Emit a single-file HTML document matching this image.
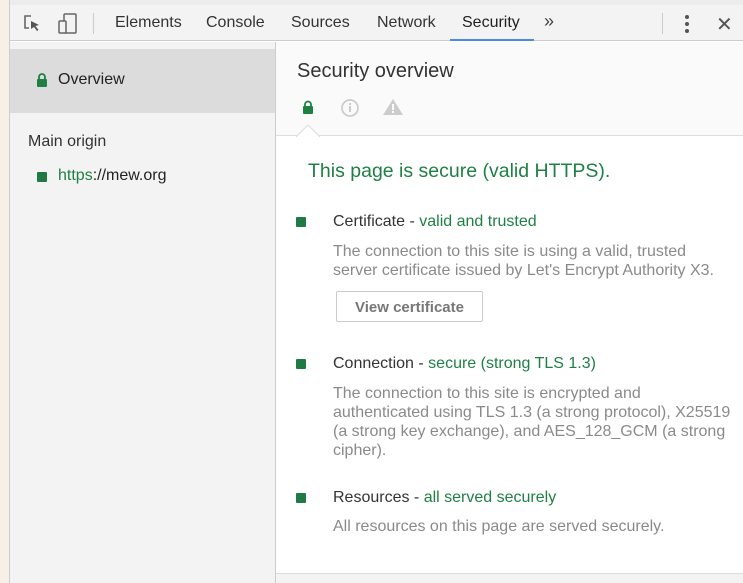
<!DOCTYPE html>
<html><head><meta charset="utf-8"><style>
*{margin:0;padding:0;box-sizing:border-box}
body{width:743px;height:583px;overflow:hidden;background:#fff;font-family:"Liberation Sans",sans-serif;position:relative;color:#333}
.a{position:absolute;white-space:nowrap}
.g{color:#1f8044}
.d{color:#8a8a8a}
.sq{position:absolute;width:10px;height:10px;background:#1f7a43;border-radius:1px}
</style></head><body>
<div class="a" style="left:0;top:0;width:10px;height:583px;background:#f8efe6"></div>
<div class="a" style="left:9px;top:0;width:1px;height:583px;background:#ccc"></div>
<div class="a" style="left:10px;top:0;width:733px;height:5px;background:#ececec"></div>
<div class="a" style="left:10px;top:5px;width:733px;height:36px;background:#f3f3f3;border-bottom:1px solid #ccc"></div>
<svg class="a" style="left:22px;top:13px" width="22" height="22" viewBox="0 0 22 22"><path d="M9 3H3v12h4" fill="none" stroke="#666" stroke-width="1.6"/><path d="M9 8l8 4-3.5 1 3 4-1.5 1-3-4-3 2z" fill="#555"/></svg>
<svg class="a" style="left:57px;top:12px" width="22" height="24" viewBox="0 0 22 24"><rect x="7" y="2" width="12" height="19" rx="1" fill="none" stroke="#666" stroke-width="1.5"/><rect x="2" y="9" width="7" height="12" rx="1" fill="#f3f3f3" stroke="#666" stroke-width="1.5"/></svg>
<div class="a" style="left:93px;top:13px;width:1px;height:21px;background:#ccc"></div>
<div class="a" style="left:115px;top:14px;font-size:16px;color:#333">Elements</div>
<div class="a" style="left:206px;top:14px;font-size:16px;color:#333">Console</div>
<div class="a" style="left:291px;top:14px;font-size:16px;color:#333">Sources</div>
<div class="a" style="left:377px;top:14px;font-size:16px;color:#333">Network</div>
<div class="a" style="left:462px;top:14px;font-size:16px;color:#222">Security</div>
<div class="a" style="left:450px;top:39px;width:84px;height:2px;background:#4a8ae8"></div>
<div class="a" style="left:544px;top:11px;font-size:18px;color:#444">»</div>
<div class="a" style="left:662px;top:13px;width:1px;height:21px;background:#ccc"></div>
<div class="a" style="left:685px;top:15px;width:4px;height:4px;border-radius:2px;background:#555;box-shadow:0 7px 0 #555,0 14px 0 #555"></div>
<div class="a" style="left:716px;top:12px;font-size:20px;color:#555">✕</div>
<!-- sidebar -->
<div class="a" style="left:10px;top:42px;width:265px;height:541px;background:#f3f3f3"></div>
<div class="a" style="left:10px;top:49px;width:265px;height:64px;background:#dcdcdc"></div>
<div class="a" style="left:275px;top:42px;width:1px;height:541px;background:#ccc"></div>
<svg class="a" style="left:36px;top:73px" width="12" height="14" viewBox="0 0 12 14"><path d="M3 6V4a3 3 0 0 1 6 0v2" fill="none" stroke="#1f8044" stroke-width="1.8"/><rect x="1" y="6" width="10" height="8" rx="1" fill="#1f8044"/></svg>
<div class="a" style="left:58px;top:71px;font-size:16px;color:#222">Overview</div>
<div class="a" style="left:28px;top:133px;font-size:16px;color:#333">Main origin</div>
<div class="sq" style="left:37px;top:172px"></div>
<div class="a" style="left:58px;top:167px;font-size:16px;color:#222"><span class="g">https</span>://mew.org</div>
<!-- main -->
<div class="a" style="left:276px;top:42px;width:467px;height:94px;background:#fafafa;border-bottom:1px solid #ddd"></div>
<div class="a" style="left:297px;top:60px;font-size:20px;color:#333">Security overview</div>
<svg class="a" style="left:301px;top:99px" width="14" height="16" viewBox="0 0 14 16"><path d="M4 8V5.5a3 3 0 0 1 6 0V8" fill="none" stroke="#1f8044" stroke-width="1.8"/><rect x="2" y="7" width="10" height="8" rx="1" fill="#1f8044"/></svg>
<svg class="a" style="left:340px;top:98px" width="20" height="20" viewBox="0 0 20 20"><circle cx="10" cy="10" r="8" fill="none" stroke="#ccc" stroke-width="1.7"/><rect x="9" y="8" width="2" height="6" fill="#ccc"/><rect x="9" y="5" width="2" height="2" fill="#ccc"/></svg>
<svg class="a" style="left:382px;top:98px" width="22" height="18" viewBox="0 0 22 18"><path d="M11 1L21 17H1z" fill="#ccc"/><rect x="10" y="6" width="2" height="6" fill="#fff"/><rect x="10" y="13" width="2" height="2" fill="#fff"/></svg>
<svg class="a" style="left:296px;top:125px" width="24" height="13" viewBox="0 0 24 13"><path d="M0 12L12 0 24 12" fill="#fff" stroke="#ddd" stroke-width="1"/></svg>
<div class="a" style="left:276px;top:137px;width:467px;height:436px;background:#fff"></div>
<div class="a g" style="left:308px;top:160px;font-size:19.5px">This page is secure (valid HTTPS).</div>
<div class="sq" style="left:296px;top:217px"></div>
<div class="a" style="left:333px;top:213px;font-size:16px">Certificate - <span class="g">valid and trusted</span></div>
<div class="a d" style="left:333px;top:242px;font-size:16px;line-height:19px">The connection to this site is using a valid, trusted<br>server certificate issued by Let's Encrypt Authority X3.</div>
<div class="a" style="left:336px;top:291px;width:147px;height:31px;border:1px solid #ccc;border-radius:2px;background:#fff;font-size:15px;font-weight:bold;color:#777;text-align:center;line-height:31px">View certificate</div>
<div class="sq" style="left:296px;top:359px"></div>
<div class="a" style="left:333px;top:355px;font-size:16px">Connection - <span class="g">secure (strong TLS 1.3)</span></div>
<div class="a d" style="left:333px;top:384px;font-size:16px;line-height:19px">The connection to this site is encrypted and<br>authenticated using TLS 1.3 (a strong protocol), X25519<br>(a strong key exchange), and AES_128_GCM (a strong<br>cipher).</div>
<div class="sq" style="left:296px;top:493px"></div>
<div class="a" style="left:333px;top:489px;font-size:16px">Resources - <span class="g">all served securely</span></div>
<div class="a d" style="left:333px;top:518px;font-size:16px">All resources on this page are served securely.</div>
<div class="a" style="left:276px;top:573px;width:467px;height:10px;background:#f3f3f3;border-top:1px solid #ddd"></div>
</body></html>
